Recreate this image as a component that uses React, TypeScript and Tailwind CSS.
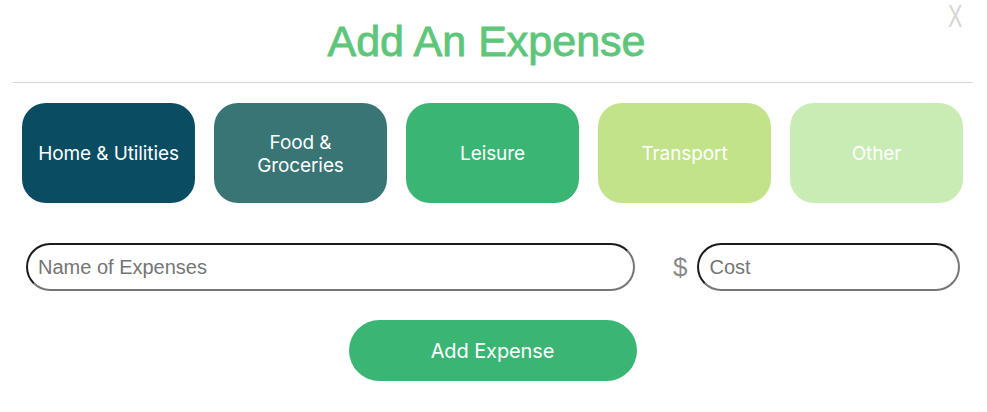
import React from 'react';

const categories = [
  { label: 'Home & Utilities', bg: 'bg-[#0a4c62]' },
  { label: 'Food & Groceries', bg: 'bg-[#387574]', wrap: true },
  { label: 'Leisure', bg: 'bg-[#3ab574]' },
  { label: 'Transport', bg: 'bg-[#c2e38a]' },
  { label: 'Other', bg: 'bg-[#c8ecb3]' },
];

const inputCls =
  'h-[48px] rounded-full border-2 border-t-[#1b1b1b] border-l-[#1b1b1b] border-b-[#767676] border-r-[#767676] bg-white px-[10px] text-[20px] text-black placeholder:text-[#757575] outline-none font-["Liberation_Sans",Arial,sans-serif]';

export default function App() {
  return (
    <div className="relative w-[987px] h-[412px] bg-white overflow-hidden">
      {/* close */}
      <button className="absolute right-[21px] top-[1px] text-[31px] leading-[32px] text-[#d6d6d6] font-['Liberation_Sans',sans-serif] scale-x-70">
        X
      </button>

      <div className="flex flex-col items-center pt-[15px]">
        <h1 className="pr-[14px] text-[43px] leading-[52px] text-[#5ec67b] font-['Liberation_Sans',Arial,sans-serif] [-webkit-text-stroke:0.9px_#5ec67b]">
          Add An Expense
        </h1>
        <div className="mt-[15px] ml-[-2px] w-[960px] h-px bg-[#d3d3d3]" />

        {/* categories */}
        <div className="mt-[20px] flex gap-[19px] ml-[-2px]">
          {categories.map((c) => (
            <button
              key={c.label}
              className={`w-[173px] h-[100px] rounded-[24px] ${c.bg} flex items-center justify-center px-[12px] pt-px text-white text-[19px] leading-[23px] font-['Inter',sans-serif] tracking-[-0.1px]`}
            >
              {c.wrap ? (
                <span>
                  Food &amp;
                  <br />
                  Groceries
                </span>
              ) : (
                c.label
              )}
            </button>
          ))}
        </div>

        {/* fields */}
        <div className="mt-[40px] w-[935px] flex items-center">
          <input className={`${inputCls} w-[609px]`} placeholder="Name of Expenses" />
          <span className="ml-[38px] mr-[10px] text-[26px] text-[#8a8a8a] font-['Liberation_Sans',Arial,sans-serif]">$</span>
          <input className={`${inputCls} w-[263px]`} placeholder="Cost" />
        </div>

        <button className="mt-[29px] ml-[-2px] w-[288px] h-[61px] rounded-full bg-[#3ab574] text-white text-[20px] font-['Inter',sans-serif] tracking-[-0.1px]">
          Add Expense
        </button>
      </div>
    </div>
  );
}
